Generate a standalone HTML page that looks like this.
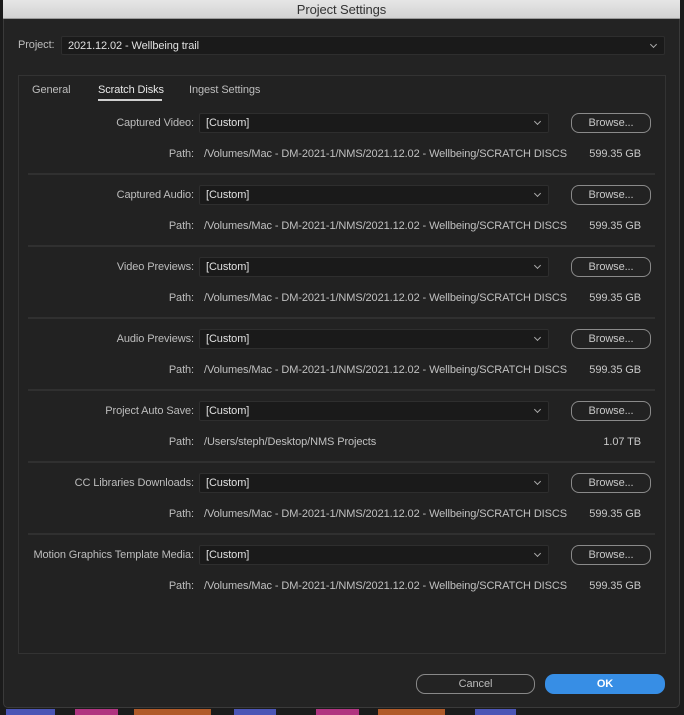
<!DOCTYPE html>
<html><head><style>
*{margin:0;padding:0;box-sizing:border-box}
body{width:684px;height:715px;background:#1b1b1b;font-family:"Liberation Sans",sans-serif;font-size:11px;color:#c8c8c8;position:relative;overflow:hidden;letter-spacing:-0.1px}
.dlg{position:absolute;left:3px;top:0;width:677px;height:708px;background:#232323;border:1px solid #3a3a3a;border-top:none;border-radius:0 0 5px 5px}
.title{position:absolute;left:3px;top:0;width:677px;height:19px;background:linear-gradient(#e6e6e6,#d2d2d2);border-bottom:1px solid #9a9a9a;color:#333;font-size:13px;text-align:center;line-height:19px}
.a{position:absolute}
.dd{position:absolute;background:#1a1a1a;border:1px solid #2e2e2e;border-radius:2px;color:#e0e0e0;padding-left:6px;line-height:19px}
.dd:after{content:"";position:absolute;right:8px;top:5px;width:4px;height:4px;border-right:1px solid #aaa;border-bottom:1px solid #aaa;transform:rotate(45deg)}
.panel{position:absolute;left:18px;top:75px;width:648px;height:579px;border:1px solid #333;background:#222}
.lbl{position:absolute;width:194px;text-align:right;color:#bdbdbd}
.br{position:absolute;left:571px;width:80px;height:20px;border:1.5px solid #8a8a8a;border-radius:8px;text-align:center;line-height:19px;color:#c8c8c8}
.sep{position:absolute;left:28px;width:627px;height:2px;background:#303030}
.sz{position:absolute;right:43px;color:#c8c8c8}
.strip{position:absolute;top:709px;height:6px}
</style></head><body>
<div class="dlg"></div>
<div class="title">Project Settings</div>
<div class="a" style="left:18px;top:39px;color:#bdbdbd">Project:</div>
<div class="dd" style="left:61px;top:36px;width:604px;height:19px;line-height:18px">2021.12.02 - Wellbeing trail</div>
<div class="panel"></div>
<div class="a" style="left:32px;top:84px;color:#bdbdbd">General</div>
<div class="a" style="left:98px;top:84px;color:#e8e8e8">Scratch Disks</div>
<div class="a" style="left:98px;top:99px;width:64px;height:2px;background:#d0d0d0"></div>
<div class="a" style="left:189px;top:84px;color:#bdbdbd">Ingest Settings</div>

<div id="rows"></div>
<script>
var rows=[["Captured Video:","/Volumes/Mac - DM-2021-1/NMS/2021.12.02 - Wellbeing/SCRATCH DISCS","599.35 GB"],
["Captured Audio:","/Volumes/Mac - DM-2021-1/NMS/2021.12.02 - Wellbeing/SCRATCH DISCS","599.35 GB"],
["Video Previews:","/Volumes/Mac - DM-2021-1/NMS/2021.12.02 - Wellbeing/SCRATCH DISCS","599.35 GB"],
["Audio Previews:","/Volumes/Mac - DM-2021-1/NMS/2021.12.02 - Wellbeing/SCRATCH DISCS","599.35 GB"],
["Project Auto Save:","/Users/steph/Desktop/NMS Projects","1.07 TB"],
["CC Libraries Downloads:","/Volumes/Mac - DM-2021-1/NMS/2021.12.02 - Wellbeing/SCRATCH DISCS","599.35 GB"],
["Motion Graphics Template Media:","/Volumes/Mac - DM-2021-1/NMS/2021.12.02 - Wellbeing/SCRATCH DISCS","599.35 GB"]];
var h="";
rows.forEach(function(r,i){var y=113+i*72;
h+='<div class="lbl" style="left:0;top:'+(y+4)+'px">'+r[0]+'</div>';
h+='<div class="dd" style="left:199px;top:'+y+'px;width:350px;height:20px">[Custom]</div>';
h+='<div class="br" style="top:'+y+'px">Browse...</div>';
h+='<div class="lbl" style="left:0;top:'+(y+35)+'px">Path:</div>';
h+='<div class="a" style="left:204px;top:'+(y+35)+'px;color:#c0c0c0">'+r[1]+'</div>';
h+='<div class="sz" style="top:'+(y+35)+'px">'+r[2]+'</div>';
if(i<6)h+='<div class="sep" style="top:'+(y+60)+'px"></div>';});
document.getElementById("rows").innerHTML=h;
</script>
<div class="a" style="left:416px;top:674px;width:119px;height:20px;border:1.5px solid #888;border-radius:9px;text-align:center;line-height:19px;color:#bbb">Cancel</div>
<div class="a" style="left:545px;top:674px;width:120px;height:20px;background:#378ee5;border-radius:9px;text-align:center;line-height:20px;color:#fff;font-weight:bold">OK</div>
<div class="strip" style="left:6px;width:49px;background:#4b55b5"></div>
<div class="strip" style="left:75px;width:43px;background:#b03480"></div>
<div class="strip" style="left:134px;width:77px;background:#b05a28"></div>
<div class="strip" style="left:234px;width:42px;background:#4b55b5"></div>
<div class="strip" style="left:316px;width:43px;background:#b03480"></div>
<div class="strip" style="left:378px;width:67px;background:#b05a28"></div>
<div class="strip" style="left:475px;width:41px;background:#4b55b5"></div>
</body></html>
